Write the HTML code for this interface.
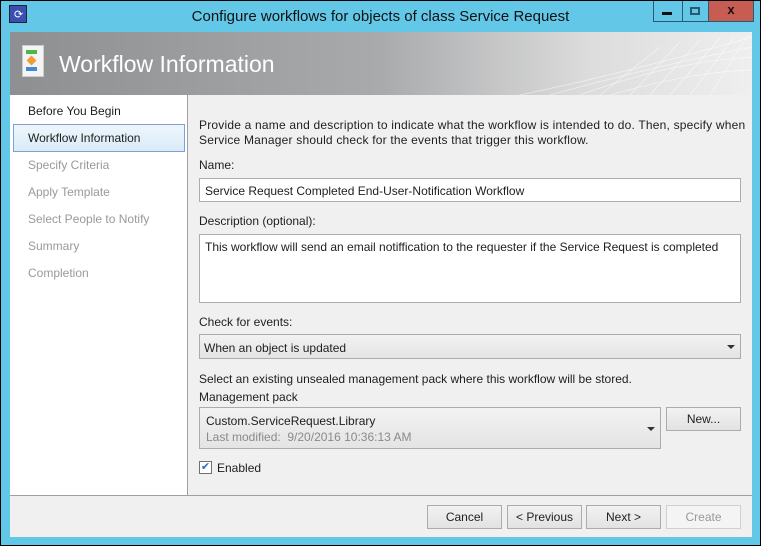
<!DOCTYPE html>
<html><head><style>
*{margin:0;padding:0;box-sizing:border-box}
body{width:761px;height:546px;overflow:hidden;background:#000;font-family:"Liberation Sans",sans-serif;font-size:12px;color:#1e1e1e;position:relative}
.a{position:absolute}
.frame{left:1px;top:1px;width:759px;height:544px;background:#63c8e8}
.t{white-space:nowrap}
.nav div{position:absolute;left:28px;white-space:nowrap;color:#999}
.box{background:#fff;border:1px solid #abadb3}
.btn{background:linear-gradient(#f2f2f2,#e2e2e2);border:1px solid #acacac;text-align:center;line-height:22px;height:24px}
.dd{background:linear-gradient(#f2f2f2,#e4e4e4);border:1px solid #acacac}
.arr{width:0;height:0;border-left:4px solid transparent;border-right:4px solid transparent;border-top:4px solid #333}
</style></head><body>
<div class="a frame"></div>
<!-- title -->
<div class="a" style="left:9px;top:5px;width:18px;height:18px;background:#3a4fb0;border:1px solid #223"></div>
<div class="a t" style="left:14px;top:8px;color:#fff;font-size:11px">⟳</div>
<div class="a t" style="left:0;width:761px;top:8px;text-align:center;font-size:15px;color:#111">Configure workflows for objects of class Service Request</div>
<div class="a" style="left:653px;top:1px;width:30px;height:21px;border:1px solid #2a5a70;border-top:none"></div>
<div class="a" style="left:662px;top:12px;width:10px;height:3px;background:#111"></div>
<div class="a" style="left:682px;top:1px;width:27px;height:21px;border:1px solid #2a5a70;border-top:none"></div>
<div class="a" style="left:690px;top:7px;width:10px;height:8px;border:2px solid #2a5a70"></div>
<div class="a" style="left:708px;top:1px;width:46px;height:21px;background:#c75c52;border:1px solid #2a5a70;border-top:none;color:#111;font-weight:bold;text-align:center;font-size:13px;line-height:18px">x</div>
<!-- header -->
<div class="a" style="left:10px;top:32px;width:742px;height:63px;background:linear-gradient(90deg,#8e8f91 0%,#a9aaac 50%,#dcdcdc 78%,#efefef 100%)"></div>
<svg class="a" style="left:480px;top:32px" width="272" height="63"><g stroke="#fff" stroke-opacity=".6" fill="none" stroke-width=".7">
<path d="M40 63 Q150 40 272 5"/><path d="M70 63 Q170 35 272 15"/><path d="M100 63 Q190 30 272 25"/><path d="M130 63 Q210 40 272 38"/>
<path d="M150 63 L200 10"/><path d="M170 63 L220 8"/><path d="M190 63 L240 6"/><path d="M210 63 L255 4"/><path d="M230 63 L268 3"/><path d="M120 63 L180 15"/></g></svg>
<div class="a" style="left:22px;top:45px;width:22px;height:32px;background:#f4f4f4;border:1px solid #ccc"></div>
<div class="a" style="left:26px;top:50px;width:11px;height:4px;background:#4cb848"></div>
<div class="a" style="left:28px;top:57px;width:7px;height:7px;background:#f19a38;transform:rotate(45deg)"></div>
<div class="a" style="left:26px;top:67px;width:11px;height:4px;background:#3d8ad6"></div>
<div class="a t" style="left:59px;top:51px;font-size:23px;color:#fff">Workflow Information</div>
<!-- nav -->
<div class="a" style="left:10px;top:95px;width:177px;height:400px;background:#fff"></div>
<div class="a" style="left:187px;top:95px;width:1px;height:400px;background:#a0a0a0"></div>
<div class="a" style="left:13px;top:124px;width:172px;height:28px;background:linear-gradient(#eef6fc,#d9ebf8);border:1px solid #7da2ce"></div>
<div class="a nav">
<div style="top:104px;color:#1e1e1e">Before You Begin</div>
<div style="top:131px;color:#1e1e1e">Workflow Information</div>
<div style="top:158px">Specify Criteria</div>
<div style="top:185px">Apply Template</div>
<div style="top:212px">Select People to Notify</div>
<div style="top:239px">Summary</div>
<div style="top:266px">Completion</div>
</div>
<!-- content -->
<div class="a" style="left:188px;top:95px;width:564px;height:400px;background:#f0f0f0"></div>
<div class="a" style="left:199px;top:118px;line-height:15px;white-space:nowrap;letter-spacing:0.2px">Provide a name and description to indicate what the workflow is intended to do. Then, specify when<br>Service Manager should check for the events that trigger this workflow.</div>
<div class="a t" style="left:199px;top:158px">Name:</div>
<div class="a box" style="left:199px;top:178px;width:542px;height:24px"></div>
<div class="a t" style="left:205px;top:184px">Service Request Completed End-User-Notification Workflow</div>
<div class="a t" style="left:199px;top:214px">Description (optional):</div>
<div class="a box" style="left:199px;top:234px;width:542px;height:69px"></div>
<div class="a t" style="left:205px;top:240px">This workflow will send an email notiffication to the requester if the Service Request is completed</div>
<div class="a t" style="left:199px;top:315px">Check for events:</div>
<div class="a dd" style="left:199px;top:334px;width:542px;height:25px"></div>
<div class="a t" style="left:204px;top:341px">When an object is updated</div>
<div class="a arr" style="left:727px;top:345px"></div>
<div class="a t" style="left:199px;top:372px">Select an existing unsealed management pack where this workflow will be stored.</div>
<div class="a t" style="left:199px;top:390px">Management pack</div>
<div class="a dd" style="left:199px;top:407px;width:462px;height:42px"></div>
<div class="a t" style="left:206px;top:414px">Custom.ServiceRequest.Library</div>
<div class="a t" style="left:206px;top:430px;color:#8a8a8a">Last modified:&nbsp; 9/20/2016 10:36:13 AM</div>
<div class="a arr" style="left:647px;top:427px"></div>
<div class="a btn" style="left:666px;top:407px;width:75px">New...</div>
<div class="a" style="left:199px;top:461px;width:13px;height:13px;background:#fff;border:1px solid #707070;color:#2a6ec0;font-size:11px;line-height:11px;text-align:center">✔</div>
<div class="a t" style="left:217px;top:461px">Enabled</div>
<!-- bottom -->
<div class="a" style="left:10px;top:495px;width:742px;height:42px;background:#f0f0f0;border-top:1px solid #a0a0a0"></div>
<div class="a btn" style="left:427px;top:505px;width:75px">Cancel</div>
<div class="a btn" style="left:507px;top:505px;width:75px">&lt; Previous</div>
<div class="a btn" style="left:586px;top:505px;width:75px">Next &gt;</div>
<div class="a btn" style="left:666px;top:505px;width:75px;color:#999;background:#f4f4f4;border-color:#d0d0d0">Create</div>
</body></html>
